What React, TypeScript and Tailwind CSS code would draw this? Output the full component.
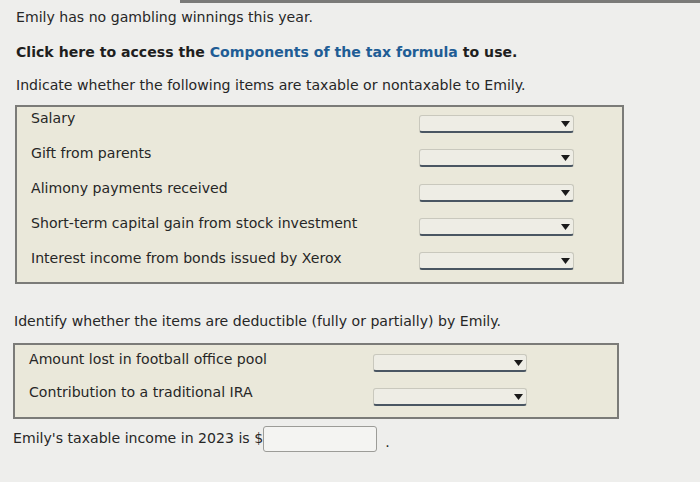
import React from "react";

const font = { fontFamily: '"DejaVu Sans", Verdana, sans-serif' };

function Select({ w, mt }: { w: string; mt: string }) {
  return (
    <div className={`relative h-[18px] ${w} ${mt} rounded-[3px] border border-[#c9c8bd] border-b-[2px] border-b-[#4a5662] bg-[#eeede5]`}>
      <svg className="absolute right-[3px] top-[5px]" width="9" height="6" viewBox="0 0 9 6">
        <path d="M0 0 L9 0 L4.5 6 Z" fill="#1a1a1a" />
      </svg>
    </div>
  );
}

function Row({ label, w, mt }: { label: string; w: string; mt: string }) {
  return (
    <div className="flex h-[22px] items-start justify-between">
      <span className="leading-[22px]">{label}</span>
      <Select w={w} mt={mt} />
    </div>
  );
}

export default function App() {
  return (
    <div className="relative h-[482px] w-[700px] overflow-hidden bg-[#eeeeec] text-[14.1px] text-[#262626]" style={font}>
      <div className="absolute left-[180px] right-0 top-0 h-[3px] bg-[#7a7a78]" />
      <div className="pl-[16px] pt-[7px]">
        <p className="leading-[20px]">Emily has no gambling winnings this year.</p>
        <p className="mt-[15px] font-bold leading-[20px] text-[#1e1e1e]">
          Click here to access the <span className="text-[#1f5d95]">Components of the tax formula</span> to use.
        </p>
        <p className="mt-[13px] leading-[20px]">Indicate whether the following items are taxable or nontaxable to Emily.</p>
      </div>
      <div className="ml-[15px] mt-[10px] flex w-[609px] flex-col gap-[13px] border-2 border-[#7b7b78] bg-[#eae8da] pb-[13px] pl-[14px] pr-[48px] pt-[0px]">
        <Row label="Salary" w="w-[155px]" mt="mt-[8px]" />
        <Row label="Gift from parents" w="w-[155px]" mt="mt-[7px]" />
        <Row label="Alimony payments received" w="w-[155px]" mt="mt-[7px]" />
        <Row label="Short-term capital gain from stock investment" w="w-[155px]" mt="mt-[6px]" />
        <Row label="Interest income from bonds issued by Xerox" w="w-[155px]" mt="mt-[5px]" />
      </div>
      <p className="ml-[14px] mt-[27px] leading-[20px]">Identify whether the items are deductible (fully or partially) by Emily.</p>
      <div className="ml-[13px] mt-[12px] flex w-[606px] flex-col gap-[11px] border-2 border-[#7b7b78] bg-[#eae8da] pb-[14px] pl-[14px] pr-[90px] pt-[3px]">
        <Row label="Amount lost in football office pool" w="w-[154px]" mt="mt-[6px]" />
        <Row label="Contribution to a traditional IRA" w="w-[154px]" mt="mt-[7px]" />
      </div>
      <div className="ml-[13px] mt-[5px] flex items-center">
        <span>Emily's taxable income in 2023 is $</span>
        <div className="h-[26px] w-[114px] rounded-[3px] border border-[#9c9c98] bg-[#f4f4f2]" />
        <span className="ml-[8px] mt-[8px]">.</span>
      </div>
    </div>
  );
}
